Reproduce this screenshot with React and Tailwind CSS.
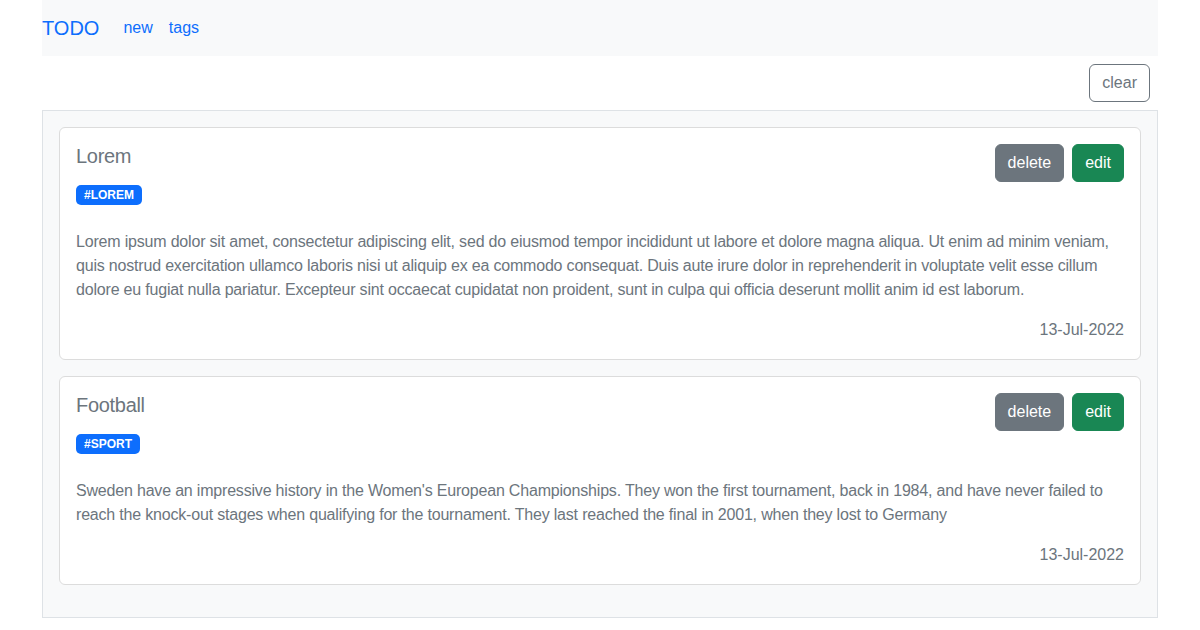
const todos = [
  {
    title: "Lorem",
    tag: "#LOREM",
    text: "Lorem ipsum dolor sit amet, consectetur adipiscing elit, sed do eiusmod tempor incididunt ut labore et dolore magna aliqua. Ut enim ad minim veniam, quis nostrud exercitation ullamco laboris nisi ut aliquip ex ea commodo consequat. Duis aute irure dolor in reprehenderit in voluptate velit esse cillum dolore eu fugiat nulla pariatur. Excepteur sint occaecat cupidatat non proident, sunt in culpa qui officia deserunt mollit anim id est laborum.",
    date: "13-Jul-2022",
  },
  {
    title: "Football",
    tag: "#SPORT",
    text: "Sweden have an impressive history in the Women's European Championships. They won the first tournament, back in 1984, and have never failed to reach the knock-out stages when qualifying for the tournament. They last reached the final in 2001, when they lost to Germany",
    date: "13-Jul-2022",
  },
];

function TodoCard({ todo }) {
  return (
    <div className="mb-4 rounded-[6px] border border-[#dcdcdc] bg-white px-4 pt-4 pb-[17px]">
      <div className="flex justify-between">
        <div>
          <div className="text-[20px] leading-6 tracking-[-0.3px] text-[#6c757d]">{todo.title}</div>
          <div className="mt-[17px] flex">
            <span className="h-[20px] rounded-[5px] bg-[#0d6efd] px-[8px] text-[12px] font-bold leading-[20px] text-white">
              {todo.tag}
            </span>
          </div>
        </div>
        <div className="flex gap-2 self-start">
          <button className="h-[38px] rounded-[6px] border border-[#6c757d] bg-[#6c757d] px-3 text-base text-white">delete</button>
          <button className="h-[38px] rounded-[6px] border border-[#198754] bg-[#198754] px-3 text-base text-white">edit</button>
        </div>
      </div>
      <p className="mt-[25px] mb-4 text-base leading-6 tracking-[-0.19px] text-[#6c757d]">{todo.text}</p>
      <div className="text-right text-base leading-6 text-[#6c757d]">{todo.date}</div>
    </div>
  );
}

export default function App() {
  return (
    <div className="min-h-screen bg-white font-['Liberation_Sans',Arial,sans-serif]">
      <div className="mx-auto w-[1116px]">
        <nav className="flex h-14 items-center bg-[#f8f9fa]">
          <span className="mr-4 text-[20px] leading-[30px] text-[#0d6efd]">TODO</span>
          <a className="px-2 text-base text-[#0d6efd]">new</a>
          <a className="px-2 text-base text-[#0d6efd]">tags</a>
        </nav>
        <div className="mt-2 flex justify-end pr-2">
          <button className="h-[38px] rounded-[6px] border border-[#6c757d] px-3 text-base text-[#6c757d]">clear</button>
        </div>
        <div className="mt-2 border border-[#dee2e6] bg-[#f8f9fa] p-4">
          {todos.map((t) => (
            <TodoCard key={t.title} todo={t} />
          ))}
        </div>
      </div>
    </div>
  );
}
